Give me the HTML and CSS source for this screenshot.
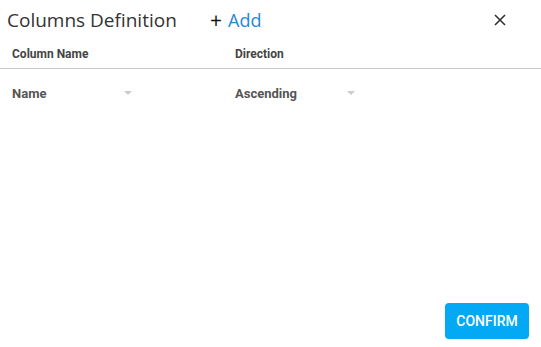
FILE: index.html
```html
<!DOCTYPE html>
<html>
<head>
<meta charset="utf-8">
<link rel="stylesheet" href="styles.css">
</head>
<body>
<div class="dialog">
  <div class="titlebar">
    <div class="title">Columns Definition</div>
    <div class="add"><span class="plus">+</span><span class="add-text">Add</span></div>
    <div class="close">
      <svg width="12" height="12" viewBox="0 0 12 12"><path d="M1 1L11 11M11 1L1 11" stroke="#333" stroke-width="1.6" fill="none"/></svg>
    </div>
  </div>
  <div class="head-row">
    <div class="col col-name">Column Name</div>
    <div class="col col-dir">Direction</div>
  </div>
  <div class="row">
    <div class="cell cell-name"><span class="val">Name</span><span class="caret"></span></div>
    <div class="cell cell-dir"><span class="val">Ascending</span><span class="caret"></span></div>
  </div>
  <div class="spacer"></div>
  <div class="footer">
    <button class="confirm">CONFIRM</button>
  </div>
</div>
</body>
</html>
```
FILE: styles.css
```css
html, body { margin: 0; padding: 0; background: #fff; }
body { width: 541px; height: 347px; overflow: hidden; font-family: Roboto, "Liberation Sans", sans-serif; }
.dialog { display: flex; flex-direction: column; height: 347px; }
.titlebar { display: flex; align-items: center; height: 39px; padding-left: 7px; }
.title { font-family: "Open Sans", "Noto Sans", sans-serif; font-size: 19px; color: #333; width: 203px; }
.add { display: flex; align-items: center; }
.plus { font-size: 21px; color: #111; font-family: "Open Sans", sans-serif; margin-right: 6px; }
.add-text { font-family: "Open Sans", sans-serif; font-size: 18px; color: #1e88d8; }
.close { margin-left: auto; margin-right: 35px; display: flex; }
.head-row { display: flex; height: 29px; align-items: center; border-bottom: 1px solid #c8c8c8; padding-left: 12px; }
.col { font-size: 12px; font-weight: 700; color: #444; }
.col-name { width: 223px; }
.row { display: flex; height: 48px; align-items: center; padding-left: 12px; }
.cell { display: flex; align-items: center; font-size: 13px; font-weight: 700; color: #555; }
.cell-name { width: 223px; }
.cell-name .val { width: 112px; }
.cell-dir .val { width: 112px; }
.caret { width: 0; height: 0; border-left: 4px solid transparent; border-right: 4px solid transparent; border-top: 4px solid #ccc; }
.spacer { flex: 1; }
.footer { display: flex; justify-content: flex-end; padding: 0 12px 8px 0; }
.confirm { width: 84px; height: 36px; border: none; border-radius: 4px; background: #03a9f4; color: #fff; font-family: Roboto, sans-serif; font-size: 14px; font-weight: 500; padding: 0; }
```
